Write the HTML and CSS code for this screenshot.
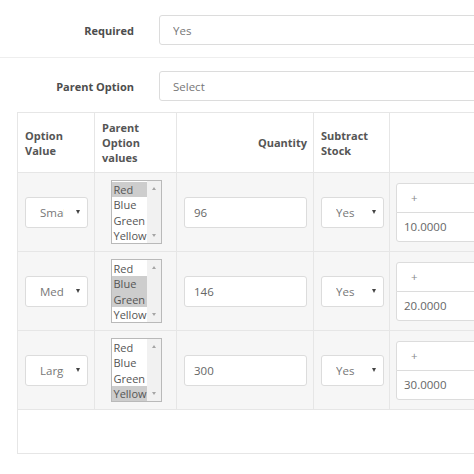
FILE: index.html
```html
<!DOCTYPE html>
<html lang="en">
<head>
  <meta charset="UTF-8" />
  <meta name="viewport" content="width=device-width, initial-scale=1" />
  <title>Option Values</title>
  <link rel="stylesheet" href="styles.css">
</head>
<body>
  <div class="page">
    <div class="form-group">
      <label class="control-label" for="input-required">Required</label>
      <select id="input-required" class="form-control">
        <option>Yes</option>
        <option>No</option>
      </select>
    </div>

    <div class="form-group last">
      <label class="control-label" for="input-parent">Parent Option</label>
      <select id="input-parent" class="form-control">
        <option>Select</option>
      </select>
    </div>

    <table class="option-table">
      <colgroup>
        <col class="col-value">
        <col class="col-parent">
        <col class="col-qty">
        <col class="col-subtract">
        <col class="col-price">
      </colgroup>
      <thead>
        <tr>
          <th>Option Value</th>
          <th>Parent Option values</th>
          <th class="text-right">Quantity</th>
          <th>Subtract Stock</th>
          <th></th>
        </tr>
      </thead>
      <tbody>
        <tr>
          <td>
            <span class="select-wrap"><select class="cell-select"><option>Small</option></select></span>
          </td>
          <td class="text-center">
            <div class="listbox">
              <ul class="listbox-options">
                <li class="selected">Red</li>
                <li>Blue</li>
                <li>Green</li>
                <li>Yellow</li>
              </ul>
              <div class="listbox-scroll"><span class="arrow-up"></span><span class="arrow-down"></span></div>
            </div>
          </td>
          <td><input type="text" class="cell-input" value="96"></td>
          <td>
            <span class="select-wrap"><select class="cell-select"><option>Yes</option></select></span>
          </td>
          <td>
            <div class="price-group">
              <select class="price-prefix"><option>+</option></select>
              <input type="text" class="price-input" value="10.0000">
            </div>
          </td>
        </tr>
        <tr>
          <td>
            <span class="select-wrap"><select class="cell-select"><option>Medium</option></select></span>
          </td>
          <td class="text-center">
            <div class="listbox">
              <ul class="listbox-options">
                <li>Red</li>
                <li class="selected">Blue</li>
                <li class="selected">Green</li>
                <li>Yellow</li>
              </ul>
              <div class="listbox-scroll"><span class="arrow-up"></span><span class="arrow-down"></span></div>
            </div>
          </td>
          <td><input type="text" class="cell-input" value="146"></td>
          <td>
            <span class="select-wrap"><select class="cell-select"><option>Yes</option></select></span>
          </td>
          <td>
            <div class="price-group">
              <select class="price-prefix"><option>+</option></select>
              <input type="text" class="price-input" value="20.0000">
            </div>
          </td>
        </tr>
        <tr>
          <td>
            <span class="select-wrap"><select class="cell-select"><option>Large</option></select></span>
          </td>
          <td class="text-center">
            <div class="listbox">
              <ul class="listbox-options">
                <li>Red</li>
                <li>Blue</li>
                <li>Green</li>
                <li class="selected">Yellow</li>
              </ul>
              <div class="listbox-scroll"><span class="arrow-up"></span><span class="arrow-down"></span></div>
            </div>
          </td>
          <td><input type="text" class="cell-input" value="300"></td>
          <td>
            <span class="select-wrap"><select class="cell-select"><option>Yes</option></select></span>
          </td>
          <td>
            <div class="price-group">
              <select class="price-prefix"><option>+</option></select>
              <input type="text" class="price-input" value="30.0000">
            </div>
          </td>
        </tr>
      </tbody>
      <tfoot>
        <tr>
          <td colspan="5"></td>
        </tr>
      </tfoot>
    </table>
  </div>
</body>
</html>
```

FILE: styles.css
```css
* {
  margin: 0;
  padding: 0;
  box-sizing: border-box;
}

html,
body {
  overflow: hidden;
  background: #ffffff;
}

body {
  font-family: 'Open Sans', 'Noto Sans', sans-serif;
  font-size: 11.5px;
  color: #666;
}

.page {
  width: 540px;
}

.form-group {
  display: grid;
  grid-template-columns: 134px 1fr;
  column-gap: 25px;
  align-items: center;
  padding: 15px 0 12px;
  border-bottom: 1px solid #eeeeee;
}

.form-group.last {
  padding: 13px 0 11px;
  border-bottom: none;
}

.control-label {
  text-align: right;
  font-size: 11px;
  font-weight: 700;
  color: #4d4d4d;
}

.form-control {
  appearance: none;
  -webkit-appearance: none;
  height: 30px;
  padding: 0 13px;
  border: 1px solid #dcdcdc;
  border-radius: 3px;
  background: #fff;
  font-family: inherit;
  font-size: 11.5px;
  color: #777;
}

/* option table */
.option-table {
  margin-left: 17px;
  width: 520px;
  table-layout: fixed;
  border-collapse: collapse;
}

.col-value { width: 77px; }
.col-parent { width: 82px; }
.col-qty { width: 137px; }
.col-subtract { width: 76px; }
.col-price { width: 148px; }

.option-table th,
.option-table td {
  border: 1px solid #e6e6e6;
  padding: 7px 6px 7px 7px;
  vertical-align: middle;
  text-align: left;
}

.option-table th {
  font-size: 11px;
  font-weight: 700;
  line-height: 15px;
  color: #555;
  height: 60px;
}

.option-table tbody td {
  background: #f6f6f6;
  height: 79px;
}

.option-table tfoot td {
  height: 44px;
  background: #fff;
}

.text-right {
  text-align: right !important;
}

.text-center {
  text-align: center !important;
}

.select-wrap {
  position: relative;
  display: inline-block;
  vertical-align: middle;
}

.select-wrap::after {
  content: "";
  position: absolute;
  right: 8px;
  top: 13px;
  border-left: 2.5px solid transparent;
  border-right: 2.5px solid transparent;
  border-top: 4px solid #444;
  pointer-events: none;
}

.cell-select {
  appearance: none;
  -webkit-appearance: none;
  width: 63px;
  height: 31px;
  padding: 0 23px 0 14px;
  border: 1px solid #dcdcdc;
  border-radius: 3px;
  background: #fff;
  font-family: inherit;
  font-size: 11.5px;
  color: #777;
  display: block;
}

.cell-input {
  width: 123px;
  height: 31px;
  padding: 0 9px;
  border: 1px solid #dcdcdc;
  border-radius: 3px;
  background: #fff;
  font-family: inherit;
  font-size: 11.5px;
  color: #666;
  display: block;
}

/* multi select list */
.listbox {
  display: inline-flex;
  vertical-align: middle;
  width: 51px;
  height: 64px;
  border: 1px solid #b9b9b9;
  background: #fff;
  text-align: left;
}

.listbox-options {
  list-style: none;
  flex: 1;
  padding-top: 1px;
}

.listbox-options li {
  font-size: 11px;
  line-height: 15.3px;
  padding-left: 2px;
  color: #555;
  white-space: nowrap;
}

.listbox-options li.selected {
  background: #cdcdcd;
}

.listbox-scroll {
  width: 14px;
  background: #f1f1f1;
  display: flex;
  flex-direction: column;
  justify-content: space-between;
  align-items: center;
  padding: 6px 0;
}

.arrow-up,
.arrow-down {
  width: 0;
  height: 0;
  border-left: 2.5px solid transparent;
  border-right: 2.5px solid transparent;
}

.arrow-up {
  border-bottom: 3px solid #a5a5a5;
}

.arrow-down {
  border-top: 3px solid #a5a5a5;
}

/* price prefix + value */
.price-group {
  margin-left: -1px;
  width: 100%;
}

.price-prefix,
.price-input {
  display: block;
  width: 100%;
  height: 30px;
  border: 1px solid #dcdcdc;
  background: #fff;
  font-family: inherit;
  font-size: 11.5px;
}

.price-prefix {
  appearance: none;
  -webkit-appearance: none;
  padding: 0 14px;
  border-radius: 3px 0 0 0;
  color: #888;
}

.price-input {
  margin-top: -1px;
  padding: 0 7px;
  border-radius: 0 0 0 3px;
  color: #666;
}
```
